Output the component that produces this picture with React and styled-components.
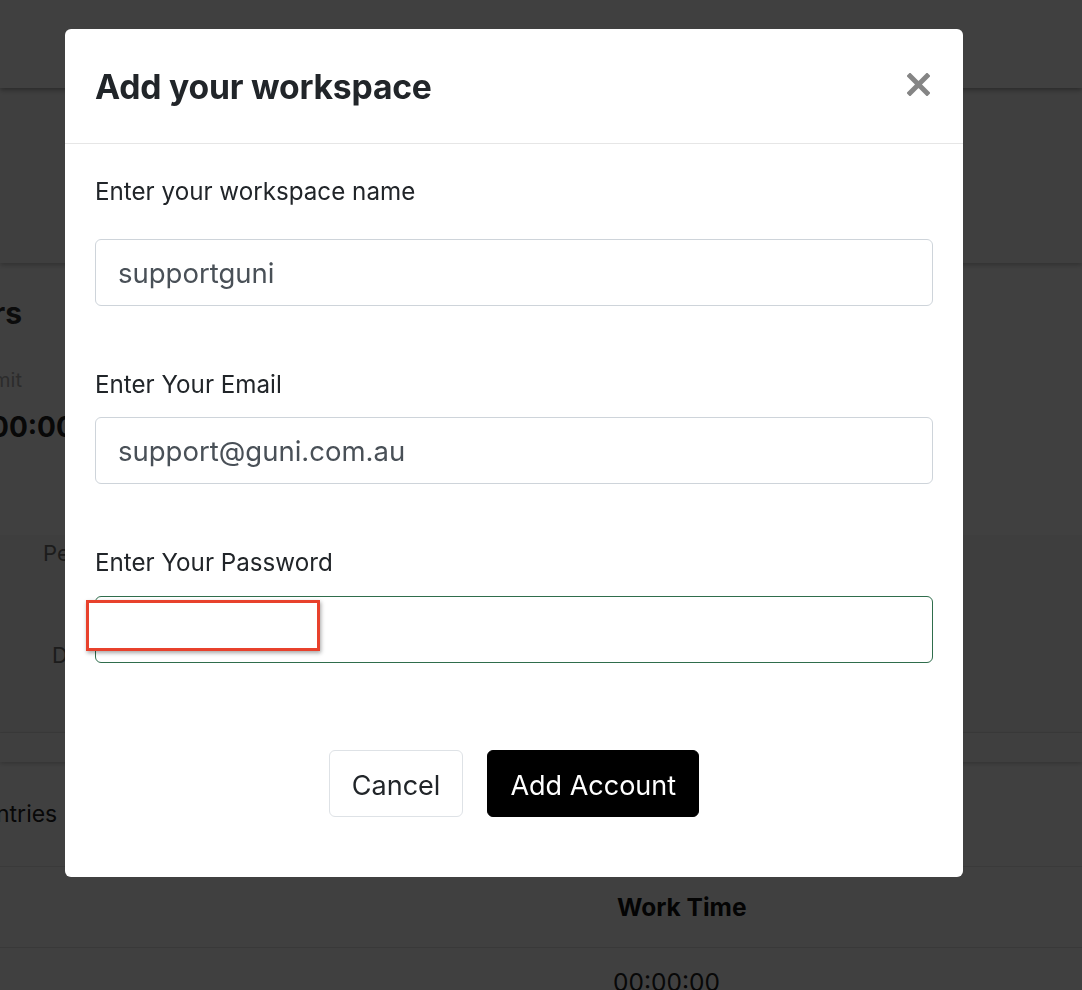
import React from "react";
import styled, { createGlobalStyle } from "styled-components";

const Global = createGlobalStyle`
  html, body { margin: 0; padding: 0; }
  body {
    font-family: Inter, "Noto Sans", "Liberation Sans", sans-serif;
    background: #ffffff;
    color: #212529;
    width: 1082px;
    height: 990px;
    overflow: hidden;
  }
  * { box-sizing: border-box; }
`;

/* ---------- underlying page (dimmed) ---------- */
const Page = styled.div`
  width: 1082px;
  height: 990px;
  overflow: hidden;
  display: flex;
  flex-direction: column;
  background: #ffffff;
`;

const TopBar = styled.header`
  height: 88px;
  flex: none;
  background: #ffffff;
  box-shadow: 0 2px 5px rgba(0, 0, 0, 0.35);
  position: relative;
  z-index: 2;
`;

const Banner = styled.section`
  height: 175px;
  flex: none;
  background: #fbfbfb;
  box-shadow: 0 2px 5px rgba(0, 0, 0, 0.25);
  position: relative;
  z-index: 1;
`;

const Summary = styled.section`
  display: flex;
  flex-direction: column;
  padding-top: 30px;
`;

const EdgeText = styled.div`
  width: ${(p) => p.$end}px;
  display: flex;
  justify-content: flex-end;
  white-space: nowrap;
  font-size: ${(p) => p.$size}px;
  font-weight: ${(p) => p.$weight || 400};
  color: ${(p) => p.$color || "#212529"};
  line-height: ${(p) => p.$lh}px;
  margin-top: ${(p) => p.$mt || 0}px;
`;

const StartText = styled.div`
  white-space: nowrap;
  padding-left: ${(p) => p.$x}px;
  font-size: ${(p) => p.$size}px;
  font-weight: ${(p) => p.$weight || 400};
  color: ${(p) => p.$color || "#212529"};
  line-height: ${(p) => p.$lh}px;
  margin-top: ${(p) => p.$mt || 0}px;
`;

const Shifted = styled.span`
  display: inline-block;
  margin-left: ${(p) => p.$dx}px;
`;

const StatsCard = styled.div`
  margin-top: 90px;
  height: 198px;
  flex: none;
  background: #f6f6f6;
  border-bottom: 1px solid #e4e4e4;
  display: flex;
  flex-direction: column;
`;

const Spacer = styled.div`
  height: 29px;
  flex: none;
  background: #f9f9f9;
  box-shadow: 0 2px 4px rgba(0, 0, 0, 0.18);
  position: relative;
`;

const TableTools = styled.div`
  height: 105px;
  flex: none;
  border-bottom: 1px solid #e8e8e8;
  display: flex;
  align-items: center;
`;

const TableHead = styled.div`
  height: 81px;
  flex: none;
  border-bottom: 1px solid #e3e3e3;
  display: flex;
  align-items: center;
`;

const TableRow = styled.div`
  height: 60px;
  flex: none;
  padding-top: 19px;
`;

/* ---------- overlay + modal ---------- */
const Overlay = styled.div`
  position: fixed;
  inset: 0;
  background: rgba(0, 0, 0, 0.75);
  z-index: 10;
  display: flex;
  align-items: flex-start;
  padding: 29px 0 0 65px;
`;

const Modal = styled.div`
  width: 898px;
  height: 848px;
  background: #ffffff;
  border-radius: 6px;
  display: flex;
  flex-direction: column;
  overflow: hidden;
`;

const ModalHeader = styled.div`
  height: 115px;
  flex: none;
  border-bottom: 1px solid #e6e6e6;
  display: flex;
  align-items: center;
  justify-content: space-between;
  padding: 0 33px 0 30px;
`;

const Title = styled.h2`
  margin: 0;
  font-size: 33.7px;
  font-weight: 700;
  color: #212529;
  letter-spacing: -0.2px;
  line-height: 40px;
  padding-top: 2px;
`;

const CloseButton = styled.button`
  border: 0;
  background: transparent;
  padding: 0;
  width: 23px;
  height: 23px;
  display: flex;
  cursor: pointer;
  margin-top: -3px;
`;

const ModalBody = styled.div`
  padding: 32px 30px 0 30px;
  display: flex;
  flex-direction: column;
`;

const Field = styled.div`
  display: flex;
  flex-direction: column;
  margin-bottom: ${(p) => p.$mb}px;
  position: relative;
`;

const Label = styled.label`
  font-size: 24.2px;
  line-height: 30px;
  padding-top: 1px;
  height: 30px;
  color: #212529;
  margin-bottom: ${(p) => p.$gap}px;
`;

const Input = styled.input`
  width: 838px;
  height: 67px;
  border: 1px solid ${(p) => (p.$focused ? "#2f6d4c" : "#ced4da")};
  border-radius: 6px;
  padding: 0 22px;
  font-family: Inter, "Noto Sans", sans-serif;
  font-size: 27.5px;
  color: #495057;
  background: #ffffff;
  outline: none;
`;

const Annotation = styled.div`
  position: absolute;
  left: -9px;
  bottom: 12px;
  width: 234px;
  height: 51px;
  border: 3px solid #e8412c;
  background: #ffffff;
  box-shadow: 1px 2px 4px rgba(0, 0, 0, 0.35);
`;

const Footer = styled.div`
  display: flex;
  justify-content: center;
  gap: 24px;
  margin-top: 87px;
`;

const Button = styled.button`
  height: 67px;
  padding: 3px 22px 0;
  border-radius: 6px;
  border: 1px solid ${(p) => (p.$primary ? "#000" : "#dee2e6")};
  background: ${(p) => (p.$primary ? "#000" : "#fff")};
  color: ${(p) => (p.$primary ? "#fff" : "#212529")};
  font-family: Inter, "Noto Sans", sans-serif;
  font-size: 27px;
  cursor: pointer;
`;

export default function App() {
  return (
    <>
      <Global />
      <Page>
        <TopBar />
        <Banner />
        <Summary>
          <EdgeText $end={22} $size={30} $weight={700} $lh={40} $color="#333">
            Timers
          </EdgeText>
          <EdgeText $end={22} $size={20} $lh={30} $mt={32} $color="#b0b0b0">
            Limit
          </EdgeText>
          <StartText $x={0} $size={28} $weight={700} $lh={36} $mt={14} $color="#222">
            <Shifted $dx={-10}>00:00:00</Shifted>
          </StartText>
          <StatsCard>
            <StartText $x={43} $size={22} $lh={30} $mt={3} $color="#6f6f6f">
              Period
            </StartText>
            <StartText $x={52} $size={22} $lh={30} $mt={72} $color="#6f6f6f">
              Date
            </StartText>
          </StatsCard>
          <Spacer />
          <TableTools>
            <StartText $x={0} $size={23} $lh={30} $color="#222">
              <Shifted $dx={-4}>ntries</Shifted>
            </StartText>
          </TableTools>
          <TableHead>
            <StartText $x={617} $size={24.5} $weight={700} $lh={30} $color="#111">
              Work Time
            </StartText>
          </TableHead>
          <TableRow>
            <StartText $x={613} $size={24.5} $lh={30} $color="#222">
              00:00:00
            </StartText>
          </TableRow>
        </Summary>
      </Page>

      <Overlay>
        <Modal role="dialog" aria-label="Add your workspace">
          <ModalHeader>
            <Title>Add your workspace</Title>
            <CloseButton aria-label="Close">
              <svg width="23" height="23" viewBox="0 0 23 23">
                <path d="M3 3 L20 20 M20 3 L3 20" stroke="#858585" strokeWidth="5" strokeLinecap="square" />
              </svg>
            </CloseButton>
          </ModalHeader>
          <ModalBody>
            <Field $mb={63}>
              <Label $gap={33}>Enter your workspace name</Label>
              <Input defaultValue="supportguni" />
            </Field>
            <Field $mb={63}>
              <Label $gap={18}>Enter Your Email</Label>
              <Input defaultValue="support@guni.com.au" />
            </Field>
            <Field $mb={0}>
              <Label $gap={19}>Enter Your Password</Label>
              <Input type="password" $focused defaultValue="" />
              <Annotation />
            </Field>
            <Footer>
              <Button>Cancel</Button>
              <Button $primary>Add Account</Button>
            </Footer>
          </ModalBody>
        </Modal>
      </Overlay>
    </>
  );
}
